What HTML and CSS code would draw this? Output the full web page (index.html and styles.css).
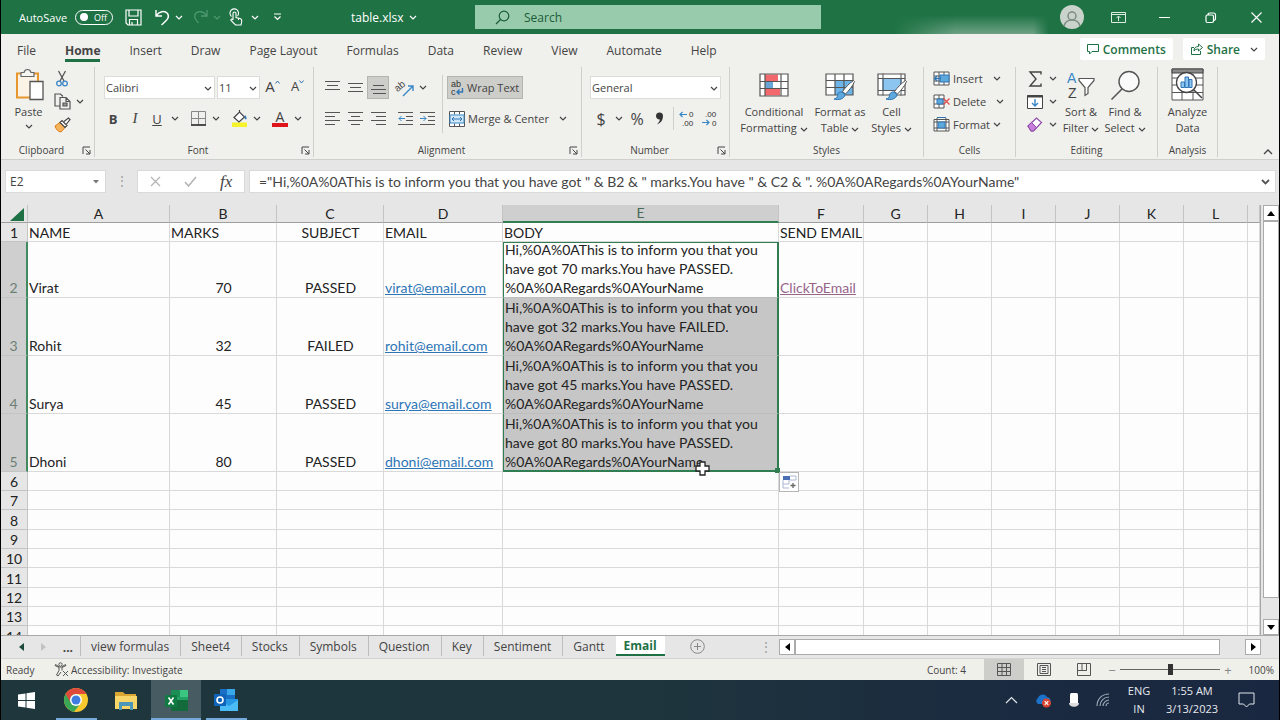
FILE: index.html
```html
<!DOCTYPE html>
<html lang="en">
<head>
    <meta charset="UTF-8">
    <meta name="viewport" content="width=device-width, initial-scale=1.0">
    <title>table.xlsx - Excel</title>
    <link rel="stylesheet" href="styles.css">
</head>
<body>
    <!-- Shared icons -->
    <svg class="defs" width="0" height="0">
        <symbol id="chev" viewBox="0 0 8 5"><path d="M1 1l3 3 3-3" fill="none" stroke="currentColor" stroke-width="1.2"/></symbol>
        <symbol id="launch" viewBox="0 0 9 9"><path d="M1 8V1h7M3.500 3.500L8 8M8 4v4H4" fill="none" stroke="currentColor"/></symbol>
        <symbol id="brush" viewBox="0 0 22 21"><path d="M20.500 1C16 4 12 8.500 9.500 12l3 2.500C16 11 20 6 21.500 2z" fill="#fff" stroke="#555"/><path d="M9 12.500c-2.500-.5-4.500 1-4.500 3.500 0 2-1.500 3-3.500 3.500 4.500 1.500 10.500 0 11-4.500z" fill="#5fa8dc" stroke="#2e75b6"/></symbol>
    </svg>

    <div class="app">
        <!-- Title bar -->
        <header class="titlebar">
            <div class="quick">
                <label for="autosave">AutoSave</label>
                <span class="toggle"><input type="checkbox" id="autosave"><span>Off</span></span>
                <button class="q-save" aria-label="Save"><svg width="17" height="17" viewBox="0 0 17 17" fill="none" stroke="#fff" stroke-width="1.2"><path d="M1 1h15v15H3l-2-2zM4 1v6h9V1M4.500 16v-5.500h8V16M7 13v3"/></svg></button>
                <button class="q-undo" aria-label="Undo"><svg width="17" height="17" viewBox="0 0 17 17" fill="none" stroke="#fff" stroke-width="1.4"><path d="M2 1v6h6M2 7c3-4.500 8.500-6 11.500-2.500 2.500 3.500 0 6.500-6 11.500"/></svg></button>
                <button aria-label="Undo list"><svg class="chev"><use href="#chev"/></svg></button>
                <button class="q-redo" aria-label="Redo"><svg width="17" height="17" viewBox="0 0 17 17" fill="none" stroke="#4f9870" stroke-width="1.3"><path d="M15 1v6H9M15 7C12 2.500 6.500 1 3.500 4.500c-2.500 3.500 0 6.500 3 9.500"/></svg></button>
                <button class="dim" aria-label="Redo list"><svg class="chev"><use href="#chev"/></svg></button>
                <button class="q-touch" aria-label="Touch mode"><svg width="14" height="18" viewBox="0 0 14 18" fill="none" stroke="#fff" stroke-width="1.1"><path d="M2.500 8.500a4.300 4.300 0 1 1 6-.5"/><path d="M4 12V5.500c0-2 3-2 3 0v4l4 1c1.500.5 2 1 1.700 3l-.7 3.500H6.500L2 12.500c-.5-1.500 1-1.800 2-.5M9.500 10v2"/></svg></button>
                <button aria-label="Touch list"><svg class="chev"><use href="#chev"/></svg></button>
                <button class="q-more" aria-label="Customize"><svg width="9" height="8" viewBox="0 0 9 8" fill="none" stroke="#fff" stroke-width="1.200"><path d="M1 1h7M1.500 3.500l3 3 3-3"/></svg></button>
            </div>
            <button class="filename">table.xlsx <svg class="chev"><use href="#chev"/></svg></button>
            <label class="search">
                <svg width="15" height="15" viewBox="0 0 15 15" fill="none" stroke="#1c5c38" stroke-width="1.2"><circle cx="9" cy="6" r="4.800"/><path d="M5.500 9.500L1 14"/></svg>
                <input type="text" placeholder="Search" aria-label="Search">
            </label>
            <div class="account"><span class="smear"></span></div>
            <div class="window">
                <button class="avatar" aria-label="Account"><svg width="24" height="24" viewBox="0 0 24 24"><circle cx="12" cy="12" r="12" fill="#c9d3cb"/><circle cx="12" cy="11" r="4" fill="none" stroke="#7d8c81" stroke-width="1.5"/><path d="M4 21c2-8 14-8 16 0" fill="none" stroke="#7d8c81" stroke-width="1.500"/></svg></button>
                <button aria-label="Ribbon display"><svg width="15" height="11" viewBox="0 0 15 11" fill="none" stroke="#dfece4"><path d="M.5.500h14v10H.5zM.5 2.500h14M7.500 9V4.500M5.500 6l2-2 2 2"/></svg></button>
                <button aria-label="Minimize"><svg width="11" height="11" viewBox="0 0 11 11"><path d="M0 5.500h11" stroke="#fff"/></svg></button>
                <button aria-label="Restore"><svg width="11" height="11" viewBox="0 0 11 11" fill="none" stroke="#fff" stroke-width="1.200"><rect x="1" y="3" width="7.500" height="7.500" rx="1.500"/><path d="M3 3c0-1.500.5-2 2-2h3.500c1.300 0 2 .7 2 2v3.500c0 1-.7 1.800-2 1.800"/></svg></button>
                <button aria-label="Close"><svg width="11" height="11" viewBox="0 0 11 11"><path d="M.5.500l10 10M10.500.500l-10 10" stroke="#fff" stroke-width="1.200"/></svg></button>
            </div>
        </header>

        <!-- Ribbon tabs -->
        <nav class="tabs">
            <button>File</button>
            <button class="active">Home</button>
            <button>Insert</button>
            <button>Draw</button>
            <button>Page Layout</button>
            <button>Formulas</button>
            <button>Data</button>
            <button>Review</button>
            <button>View</button>
            <button>Automate</button>
            <button>Help</button>
            <div class="share">
                <button><svg width="12" height="12" viewBox="0 0 12 12" fill="none" stroke="#1e7145"><path d="M.5 1.500h11v7H5l-2.500 2.500V8.500h-2z"/></svg>Comments</button>
                <button><svg width="13" height="12" viewBox="0 0 13 12" fill="none" stroke="#1e7145"><path d="M4 4.500H1.500v7h9V8M4 8c0-3 1.500-4.500 4.500-4.500V1l4 3.500-4 3.500V6C6.500 6 5 6.500 4 8z"/></svg>Share<svg class="chev"><use href="#chev"/></svg></button>
            </div>
        </nav>

        <!-- Ribbon -->
        <section class="ribbon">
            <div class="group clipboard">
                <div class="body">
                    <button class="big paste">
                        <svg width="30" height="32" viewBox="0 0 30 32"><path d="M3 5h21v24H3z" fill="#fbf3e6" stroke="#e8962e" stroke-width="2"/><path d="M7 8V4h3c1-4 6-4 7 0h3v4z" fill="#f5f5f2" stroke="#666" stroke-width="1.200"/><path d="M16 13h13v18H16z" fill="#fff" stroke="#555" stroke-width="1.300"/></svg>
                        <span>Paste</span><svg class="chev"><use href="#chev"/></svg>
                    </button>
                    <div class="stack">
                        <button class="tool" aria-label="Cut"><svg width="12" height="17" viewBox="0 0 12 17" fill="none"><path d="M2.500 1l5.500 10M9.500 1L4 11" stroke="#555" stroke-width="1.300"/><circle cx="3" cy="13.500" r="2.300" stroke="#3a87c8" stroke-width="1.300"/><circle cx="9" cy="13.500" r="2.300" stroke="#3a87c8" stroke-width="1.300"/></svg></button>
                        <span class="pair"><button class="tool" aria-label="Copy"><svg width="17" height="17" viewBox="0 0 17 17" fill="none" stroke="#555" stroke-width="1.200"><path d="M6 13H1V1h5.500L9 3.500"/><path d="M6 4.500h6l4 4V16H6zM12 4.500v4h4"/><path d="M9 10h4v3H9z" fill="#999"/></svg></button><button class="arrow" aria-label="Copy options"><svg class="chev"><use href="#chev"/></svg></button></span>
                        <button class="tool" aria-label="Format painter"><svg width="17" height="16" viewBox="0 0 17 16"><path d="M1 9l5-3.500 5 5L7 15c-3-.5-5-2.500-6-6z" fill="#f7b35a" stroke="#e07f1c"/><path d="M6 5.500l2-2 5 5-2 2zM10 4.500l4.500-3.500 1.500 1.500-3.500 4.500" fill="#fff" stroke="#444" stroke-width="1.200"/></svg></button>
                    </div>
                </div>
                <div class="caption"><span>Clipboard</span><button aria-label="Clipboard settings"><svg width="9" height="9"><use href="#launch"/></svg></button></div>
            </div>

            <div class="group font">
                <div class="body column">
                    <div class="line">
                        <span class="combo face"><select aria-label="Font"><option>Calibri</option></select><svg class="chev"><use href="#chev"/></svg></span>
                        <span class="combo size"><select aria-label="Font size"><option>11</option></select><svg class="chev"><use href="#chev"/></svg></span>
                        <button class="tool grow" aria-label="Increase font size"><b>A</b><svg width="5" height="4" viewBox="0 0 5 4"><path d="M.5 3.500l2-2.500 2 2.500" fill="none" stroke="#2e75b6"/></svg></button>
                        <button class="tool grow small" aria-label="Decrease font size"><b>A</b><svg width="5" height="4" viewBox="0 0 5 4"><path d="M.5.500l2 2.500 2-2.500" fill="none" stroke="#2e75b6"/></svg></button>
                    </div>
                    <div class="line marks">
                        <button class="tool bold">B</button>
                        <button class="tool italic">I</button>
                        <span class="pair"><button class="tool underline">U</button><button class="arrow" aria-label="Underline options"><svg class="chev"><use href="#chev"/></svg></button></span>
                        <span class="pair"><button class="tool" aria-label="Borders"><svg width="15" height="15" viewBox="0 0 15 15"><path d="M.5.500h14v13.500H.5zM7.500 1v13M1 7.500h13" fill="none" stroke="#888"/><path d="M0 14h15" stroke="#333" stroke-width="1.600"/></svg></button><button class="arrow" aria-label="Border options"><svg class="chev"><use href="#chev"/></svg></button></span>
                        <span class="pair"><button class="tool" aria-label="Fill color"><svg width="17" height="17" viewBox="0 0 17 17"><path d="M1 12.500h15V17H1z" fill="#f7f32a"/><path d="M3 7.500L8.500 2l5 5L8 12zM8.500 2V0" fill="#fff" stroke="#444" stroke-width="1.200"/><path d="M14 5c2 2.500 2 4 .8 4.500C13 9 13.500 7 14 5z" fill="#2e75b6"/></svg></button><button class="arrow" aria-label="Fill options"><svg class="chev"><use href="#chev"/></svg></button></span>
                        <span class="pair"><button class="tool color">A</button><button class="arrow" aria-label="Font color options"><svg class="chev"><use href="#chev"/></svg></button></span>
                    </div>
                </div>
                <div class="caption"><span>Font</span><button aria-label="Font settings"><svg width="9" height="9"><use href="#launch"/></svg></button></div>
            </div>

            <div class="group alignment">
                <div class="body">
                    <div class="column">
                        <div class="line">
                            <button class="tool" aria-label="Top align"><svg class="bars"><path d="M0 1.500h15M2 5.500h11M0 9.500h15"/></svg></button>
                            <button class="tool" aria-label="Middle align"><svg class="bars"><path d="M0 3.500h15M2 7.500h11M0 11.500h15"/></svg></button>
                            <button class="tool on" aria-label="Bottom align"><svg class="bars"><path d="M2 5.500h11M0 9.500h15M2 13.500h13"/></svg></button>
                            <span class="pair"><button class="tool" aria-label="Orientation"><svg width="18" height="18" viewBox="0 0 18 18"><text x="1" y="12" transform="rotate(-40 3 12)" font-size="10" fill="#444">ab</text><path d="M7 17L16.500 7.500M12 7h5v5" fill="none" stroke="#3a87c8" stroke-width="1.400"/></svg></button><button class="arrow" aria-label="Orientation options"><svg class="chev"><use href="#chev"/></svg></button></span>
                        </div>
                        <div class="line">
                            <button class="tool" aria-label="Align left"><svg class="bars"><path d="M0 1.500h15M0 5.500h10M0 9.500h15M0 13.500h10"/></svg></button>
                            <button class="tool" aria-label="Center"><svg class="bars"><path d="M0 1.500h15M3 5.500h9M0 9.500h15M3 13.500h9"/></svg></button>
                            <button class="tool" aria-label="Align right"><svg class="bars"><path d="M0 1.500h15M5 5.500h10M0 9.500h15M5 13.500h10"/></svg></button>
                            <span class="pair">
                                <button class="tool" aria-label="Decrease indent"><svg class="bars"><path d="M0 1.500h15M8 5.500h7M8 9.500h7M0 13.500h15"/><path class="blue" d="M7 7.500H1M3.500 5L1 7.500 3.500 10"/></svg></button>
                                <button class="tool" aria-label="Increase indent"><svg class="bars"><path d="M0 1.500h15M8 5.500h7M8 9.500h7M0 13.500h15"/><path class="blue" d="M0 7.500h6M3.500 5L6 7.500 3.500 10"/></svg></button>
                            </span>
                        </div>
                    </div>
                    <div class="column split">
                        <button class="text on"><svg width="15" height="18" viewBox="0 0 15 18"><text x="2" y="8" font-size="9" fill="#333">ab</text><text x="2" y="16" font-size="9" fill="#333">c</text><path d="M13.500 9v4H8M10.500 10.500L8 13l2.500 2.500" fill="none" stroke="#2e75b6" stroke-width="1.400"/></svg>Wrap Text</button>
                        <button class="text"><svg width="16" height="16" viewBox="0 0 16 16"><path d="M.5.500h15v15H.5zM5.500.500v3M10.500.500v3M5.500 12.500v3M10.500 12.500v3" fill="#fff" stroke="#555"/><path d="M1 4h14v8H1z" fill="#d2e8f8" stroke="#3a87c8"/><path d="M3 8h10M5 6L3 8l2 2M11 6l2 2-2 2" fill="none" stroke="#2e75b6"/></svg>Merge &amp; Center<svg class="chev gap"><use href="#chev"/></svg></button>
                    </div>
                </div>
                <div class="caption"><span>Alignment</span><button aria-label="Alignment settings"><svg width="9" height="9"><use href="#launch"/></svg></button></div>
            </div>

            <div class="group number">
                <div class="body column">
                    <span class="combo format"><select aria-label="Number format"><option>General</option></select><svg class="chev"><use href="#chev"/></svg></span>
                    <div class="line">
                        <button class="tool sign">$</button><button class="arrow" aria-label="Currency options"><svg class="chev"><use href="#chev"/></svg></button>
                        <button class="tool sign">%</button>
                        <button class="tool" aria-label="Comma style"><svg width="9" height="13" viewBox="0 0 9 13"><path d="M1 4a3.500 3.500 0 0 1 7 0c0 4-2 7-6 8.500 1.800-2 2.800-3.500 2.800-5C2.500 7.500 1 6 1 4z" fill="#333"/></svg></button>
                        <button class="tool rule" aria-label="Increase decimal"><svg width="17" height="19" viewBox="0 0 17 19"><text x="11" y="8" font-size="8" fill="#333">0</text><text x="4" y="17" font-size="8" fill="#333">.00</text><path d="M9 5.500H2M4.500 3L2 5.500 4.500 8" fill="none" stroke="#3a87c8" stroke-width="1.200"/></svg></button>
                        <button class="tool" aria-label="Decrease decimal"><svg width="17" height="19" viewBox="0 0 17 19"><text x="4" y="8" font-size="8" fill="#333">.00</text><text x="11" y="17" font-size="8" fill="#333">0</text><path d="M1 13.500h7M5.500 11L8 13.500 5.500 16" fill="none" stroke="#3a87c8" stroke-width="1.200"/></svg></button>
                    </div>
                </div>
                <div class="caption"><span>Number</span><button aria-label="Number settings"><svg width="9" height="9"><use href="#launch"/></svg></button></div>
            </div>

            <div class="group styles">
                <div class="body">
                    <button class="big cond">
                        <svg width="30" height="32" viewBox="0 0 30 32"><path d="M1 5.500h28v22H1z" fill="#fff"/><path d="M6 6h13v7H6zM6 20h15v7H6z" fill="#f2686c"/><path d="M6 13h8v7H6z" fill="#6aa5d8"/><path d="M1 5.500h28v22H1zM6 5v23M22 5v23M1 13h28M1 20h28" fill="none" stroke="#555" stroke-width="1.200"/></svg>
                        <span>Conditional<br>Formatting <svg class="chev"><use href="#chev"/></svg></span>
                    </button>
                    <button class="big fmt">
                        <svg width="32" height="32" viewBox="0 0 32 32"><path d="M2 5.500h27v21H2z" fill="#fff"/><path d="M11 12h18v14.500H11z" fill="#6db4e8"/><path d="M2 5.500h27v21H2zM11 5v22M20 5v22M2 12h27M2 19h27" fill="none" stroke="#555" stroke-width="1.200"/><use href="#brush" x="9" y="11" width="22" height="21"/></svg>
                        <span>Format as<br>Table <svg class="chev"><use href="#chev"/></svg></span>
                    </button>
                    <button class="big cell">
                        <svg width="32" height="32" viewBox="0 0 32 32"><path d="M2 5.500h27v21H2z" fill="#fff" stroke="#555" stroke-width="1.200"/><path d="M7 10h18v12H7z" fill="#8cc5ef" stroke="#3a87c8"/><path d="M7 5v22M25 5v22M2 10h27M2 22h27" fill="none" stroke="#555"/><use href="#brush" x="9" y="11" width="22" height="21"/></svg>
                        <span>Cell<br>Styles <svg class="chev"><use href="#chev"/></svg></span>
                    </button>
                </div>
                <div class="caption"><span>Styles</span></div>
            </div>

            <div class="group cells">
                <div class="body stack">
                    <button class="text"><svg width="17" height="15" viewBox="0 0 17 15"><path d="M1 1h15v13H1zM1 5h15M1 10h15M6 1v13M11 1v13" fill="#fff" stroke="#555"/><path d="M7 4h9v7H7z" fill="#5fa8dc" stroke="#2e75b6"/><path d="M8 7.500H1M4 5L1.500 7.500 4 10" fill="none" stroke="#2e75b6" stroke-width="1.300"/></svg>Insert<svg class="chev gap"><use href="#chev"/></svg></button>
                    <button class="text"><svg width="17" height="15" viewBox="0 0 17 15"><path d="M1 1h10v13H1zM1 5h10M1 10h10M6 1v13" fill="#fff" stroke="#555"/><path d="M4 5h6v5H4z" fill="#5fa8dc" stroke="#2e75b6"/><path d="M10.500 4.500l6 6M16.500 4.500l-6 6" stroke="#e05050" stroke-width="1.400"/></svg>Delete<svg class="chev gap"><use href="#chev"/></svg></button>
                    <button class="text"><svg width="17" height="15" viewBox="0 0 17 15"><path d="M1 2.500h15V14H1zM4 1v13M13 1v13M1 5h15M1 11h15" fill="#fff" stroke="#555"/><path d="M5 5h7v6H5z" fill="#5fa8dc" stroke="#2e75b6"/><path d="M4 .500h9" stroke="#2e75b6"/></svg>Format<svg class="chev"><use href="#chev"/></svg></button>
                </div>
                <div class="caption"><span>Cells</span></div>
            </div>

            <div class="group editing">
                <div class="body">
                    <div class="stack">
                        <span class="pair"><button class="tool" aria-label="AutoSum"><svg width="13" height="16" viewBox="0 0 13 16"><path d="M12 3.500V1H1l6 7-6 7h11v-2.500" fill="none" stroke="#444" stroke-width="1.400"/></svg></button><button class="arrow" aria-label="Sum options"><svg class="chev"><use href="#chev"/></svg></button></span>
                        <span class="pair"><button class="tool" aria-label="Fill"><svg width="16" height="14" viewBox="0 0 16 14"><path d="M.5.500h15v13H.5z" fill="#fff" stroke="#444"/><path d="M0 1.500h16" stroke="#444" stroke-width="2"/><path d="M8 4v7M5 8l3 3 3-3" fill="none" stroke="#3a87c8" stroke-width="1.400"/></svg></button><button class="arrow" aria-label="Fill options"><svg class="chev"><use href="#chev"/></svg></button></span>
                        <span class="pair"><button class="tool" aria-label="Clear"><svg width="16" height="15" viewBox="0 0 16 15"><path d="M1 9L9.500 1l5 4.500L6.500 14H4z" fill="#fff" stroke="#8e4aa8" stroke-width="1.200"/><path d="M1 9l3.500-3.500 5 5L6.500 14H4z" fill="#c77fdb" stroke="#8e4aa8"/></svg></button><button class="arrow" aria-label="Clear options"><svg class="chev"><use href="#chev"/></svg></button></span>
                    </div>
                    <button class="big sort">
                        <svg width="30" height="32" viewBox="0 0 30 32"><text x="1" y="14" font-size="14" fill="#3a87c8">A</text><text x="2" y="29" font-size="14" fill="#444">Z</text><path d="M13 10h15v2l-6 7v6l-3 2v-8l-6-7z" fill="#fff" stroke="#555" stroke-width="1.200"/></svg>
                        <span>Sort &amp;<br>Filter <svg class="chev"><use href="#chev"/></svg></span>
                    </button>
                    <button class="big find">
                        <svg width="30" height="32" viewBox="0 0 30 32"><circle cx="19" cy="13" r="10" fill="#fafafa" stroke="#555" stroke-width="1.400"/><path d="M12 20.500L1.500 31" stroke="#555" stroke-width="1.600"/></svg>
                        <span>Find &amp;<br>Select <svg class="chev"><use href="#chev"/></svg></span>
                    </button>
                </div>
                <div class="caption"><span>Editing</span></div>
            </div>

            <div class="group analysis">
                <div class="body">
                    <button class="big data">
                        <svg width="33" height="33" viewBox="0 0 33 33"><path d="M1 1h31v31H1zM1 10h31M1 17h31M1 24.500h31M11 6v26M22 6v26" fill="#fff" stroke="#555"/><path d="M1 1h31v4H1z" fill="#8a8a8a" stroke="#444"/><circle cx="15.500" cy="14.500" r="10" fill="#fff" stroke="#444" stroke-width="1.300"/><path d="M22.500 21.500L31 30" stroke="#444" stroke-width="1.500"/><path d="M10 14h3.500v5.500H10zM14 9h3.500v10.500H14zM18 11.500h3v8h-3z" fill="#8cc5ef" stroke="#2e75b6"/></svg>
                        <span>Analyze<br>Data</span>
                    </button>
                </div>
                <div class="caption"><span>Analysis</span></div>
            </div>
            <button class="collapse" aria-label="Collapse ribbon"><svg width="10" height="6" viewBox="0 0 10 6"><path d="M1 5l4-4 4 4" fill="none" stroke="#444" stroke-width="1.300"/></svg></button>
        </section>

        <!-- Formula bar -->
        <section class="formulabar">
            <div class="namebox"><input type="text" value="E2" aria-label="Name box"><button aria-label="Names"><svg width="6" height="4" viewBox="0 0 6 4"><path d="M0 0h6L3 3.500z" fill="#777"/></svg></button></div>
            <span class="dots">⋮</span>
            <div class="fx">
                <button aria-label="Cancel"><svg width="11" height="11" viewBox="0 0 11 11"><path d="M1 1l9 9M10 1l-9 9" stroke="#b5b5b5" stroke-width="1.300"/></svg></button>
                <button aria-label="Enter"><svg width="13" height="11" viewBox="0 0 13 11"><path d="M1 6l3.500 4L12 1" fill="none" stroke="#b5b5b5" stroke-width="1.600"/></svg></button>
                <button class="fn">fx</button>
            </div>
            <div class="formula">
                <input type="text" aria-label="Formula" value="=&quot;Hi,%0A%0AThis is to inform you that you have got &quot; &amp; B2 &amp; &quot; marks.You have &quot; &amp; C2 &amp; &quot;. %0A%0ARegards%0AYourName&quot;">
                <button aria-label="Expand"><svg width="9" height="6" viewBox="0 0 9 6"><path d="M1 1l3.500 3.500L8 1" fill="none" stroke="#555" stroke-width="1.800"/></svg></button>
            </div>
        </section>

        <!-- Worksheet -->
        <main class="sheet">
            <div class="cells-area">
                <table>
                    <colgroup>
                        <col class="c-num"><col class="c-a"><col class="c-b"><col class="c-b"><col class="c-d"><col class="c-e"><col class="c-f">
                        <col class="c-g"><col class="c-g"><col class="c-g"><col class="c-g"><col class="c-g"><col class="c-g"><col>
                    </colgroup>
                    <thead>
                        <tr><th class="corner"><svg width="14" height="13" viewBox="0 0 14 13"><path d="M14 0v13H0z" fill="#1e7145"/></svg></th><th>A</th><th>B</th><th>C</th><th>D</th><th class="sel">E</th><th>F</th><th>G</th><th>H</th><th>I</th><th>J</th><th>K</th><th>L</th><th></th></tr>
                    </thead>
                    <tbody>
                        <tr><th>1</th><td>NAME</td><td>MARKS</td><td class="mid">SUBJECT</td><td>EMAIL</td><td>BODY</td><td>SEND EMAIL</td><td></td><td></td><td></td><td></td><td></td><td></td><td></td></tr>
                        <tr class="tall first"><th>2</th><td>Virat</td><td class="mid">70</td><td class="mid">PASSED</td><td><a href="mailto:virat@email.com">virat@email.com</a></td><td class="pick"><div>Hi,%0A%0AThis is to inform you that you<br>have got 70 marks.You have PASSED.<br>%0A%0ARegards%0AYourName</div></td><td><a class="visited" href="#send">ClickToEmail</a></td><td></td><td></td><td></td><td></td><td></td><td></td><td></td></tr>
                        <tr class="tall"><th>3</th><td>Rohit</td><td class="mid">32</td><td class="mid">FAILED</td><td><a href="mailto:rohit@email.com">rohit@email.com</a></td><td class="pick"><div>Hi,%0A%0AThis is to inform you that you<br>have got 32 marks.You have FAILED.<br>%0A%0ARegards%0AYourName</div></td><td></td><td></td><td></td><td></td><td></td><td></td><td></td><td></td></tr>
                        <tr class="tall"><th>4</th><td>Surya</td><td class="mid">45</td><td class="mid">PASSED</td><td><a href="mailto:surya@email.com">surya@email.com</a></td><td class="pick"><div>Hi,%0A%0AThis is to inform you that you<br>have got 45 marks.You have PASSED.<br>%0A%0ARegards%0AYourName</div></td><td></td><td></td><td></td><td></td><td></td><td></td><td></td><td></td></tr>
                        <tr class="tall last"><th>5</th><td>Dhoni</td><td class="mid">80</td><td class="mid">PASSED</td><td><a href="mailto:dhoni@email.com">dhoni@email.com</a></td><td class="pick"><div>Hi,%0A%0AThis is to inform you that you<br>have got 80 marks.You have PASSED.<br>%0A%0ARegards%0AYourName</div>
                            <span class="handle"></span>
                            <button class="autofill" aria-label="Auto fill options"><svg width="15" height="14" viewBox="0 0 15 14"><path d="M1 1h7v4H1z" fill="#4a6fb5"/><path d="M8 1h6v4H8M1 5v4h6V5M1 9v4h6" fill="none" stroke="#a9b6d3"/><path d="M11 8v5M8.500 10.500h5" stroke="#666" stroke-width="1.300"/></svg></button>
                            <svg class="pointer" width="15" height="15" viewBox="0 0 15 15"><path d="M5 1h5v4h4v5h-4v4H5v-4H1V5h4z" fill="#fff" stroke="#222" stroke-width="1.300"/></svg>
                        </td><td></td><td></td><td></td><td></td><td></td><td></td><td></td><td></td></tr>
                        <tr><th>6</th><td></td><td></td><td></td><td></td><td></td><td></td><td></td><td></td><td></td><td></td><td></td><td></td><td></td></tr>
                        <tr><th>7</th><td></td><td></td><td></td><td></td><td></td><td></td><td></td><td></td><td></td><td></td><td></td><td></td><td></td></tr>
                        <tr><th>8</th><td></td><td></td><td></td><td></td><td></td><td></td><td></td><td></td><td></td><td></td><td></td><td></td><td></td></tr>
                        <tr><th>9</th><td></td><td></td><td></td><td></td><td></td><td></td><td></td><td></td><td></td><td></td><td></td><td></td><td></td></tr>
                        <tr><th>10</th><td></td><td></td><td></td><td></td><td></td><td></td><td></td><td></td><td></td><td></td><td></td><td></td><td></td></tr>
                        <tr><th>11</th><td></td><td></td><td></td><td></td><td></td><td></td><td></td><td></td><td></td><td></td><td></td><td></td><td></td></tr>
                        <tr><th>12</th><td></td><td></td><td></td><td></td><td></td><td></td><td></td><td></td><td></td><td></td><td></td><td></td><td></td></tr>
                        <tr><th>13</th><td></td><td></td><td></td><td></td><td></td><td></td><td></td><td></td><td></td><td></td><td></td><td></td><td></td></tr>
                        <tr><th>14</th><td></td><td></td><td></td><td></td><td></td><td></td><td></td><td></td><td></td><td></td><td></td><td></td><td></td></tr>
                    </tbody>
                </table>
            </div>
            <div class="vscroll">
                <button aria-label="Scroll up"><svg width="8" height="5" viewBox="0 0 8 5"><path d="M4 0l4 5H0z"/></svg></button>
                <span class="thumb"></span>
                <button aria-label="Scroll down"><svg width="8" height="5" viewBox="0 0 8 5"><path d="M0 0h8L4 5z"/></svg></button>
            </div>
        </main>

        <!-- Sheet tabs -->
        <nav class="sheets">
            <div class="step">
                <button aria-label="Previous sheet"><svg width="5" height="8" viewBox="0 0 5 8"><path d="M5 0v8L0 4z" fill="#1c4a3a"/></svg></button>
                <button aria-label="Next sheet"><svg width="5" height="8" viewBox="0 0 5 8"><path d="M0 0v8l5-4z" fill="#c2c2c2"/></svg></button>
                <button class="all">...</button>
            </div>
            <button>view formulas</button>
            <button>Sheet4</button>
            <button>Stocks</button>
            <button>Symbols</button>
            <button>Question</button>
            <button>Key</button>
            <button>Sentiment</button>
            <button>Gantt</button>
            <button class="active">Email</button>
            <button class="add" aria-label="New sheet"><svg width="15" height="15" viewBox="0 0 15 15" fill="none" stroke="#888"><circle cx="7.500" cy="7.500" r="6.800"/><path d="M7.500 4v7M4 7.500h7"/></svg></button>
            <span class="dots">⋮</span>
            <div class="hscroll">
                <button aria-label="Scroll left"><svg width="5" height="8" viewBox="0 0 5 8"><path d="M5 0v8L0 4z"/></svg></button>
                <span class="thumb"></span>
                <button aria-label="Scroll right"><svg width="5" height="8" viewBox="0 0 5 8"><path d="M0 0v8l5-4z"/></svg></button>
            </div>
        </nav>

        <!-- Status bar -->
        <footer class="status">
            <span class="ready">Ready</span>
            <svg width="15" height="15" viewBox="0 0 15 15" fill="none" stroke="#555"><circle cx="6.500" cy="2.500" r="1.700"/><path d="M1 3.500l4 2v3L2.500 13l1.500 1 3-4M12 3.500l-4 2v3M1 3.500l.5-1 4 2.500h2l4-2.500.5 1M9 9l5 5M14 9l-5 5"/></svg>
            <span>Accessibility: Investigate</span>
            <span class="count">Count: 4</span>
            <button class="view on" aria-label="Normal"><svg width="14" height="13" viewBox="0 0 14 13" fill="none" stroke="#555"><path d="M.5.500h13v12H.5zM.5 4.500h13M.5 8.500h13M5 .500v12M9.500.500v12"/></svg></button>
            <button class="view" aria-label="Page layout"><svg width="14" height="13" viewBox="0 0 14 13" fill="none" stroke="#555"><path d="M.5.500h13v12H.5zM3 2.500h8v8H3zM5 4.500h4M5 6.500h4M5 8.500h4"/></svg></button>
            <button class="view" aria-label="Page break"><svg width="14" height="13" viewBox="0 0 14 13" fill="none" stroke="#555"><path d="M.5.500h13v12H.5zM5 .500v7h4.500v-7M.5 7.500H5M9.500 7.500v-3"/></svg></button>
            <button class="zoom">−</button>
            <input type="range" min="0" max="100" value="50" aria-label="Zoom">
            <button class="zoom">+</button>
            <span class="percent">100%</span>
        </footer>

        <!-- Taskbar -->
        <footer class="taskbar">
            <button aria-label="Start"><svg width="17" height="17" viewBox="0 0 17 17"><path d="M0 2.500l7.500-1V8H0zM8.500 1.300L17 0v8H8.500zM0 9h7.500v6.500l-7.500-1zM8.500 9H17v8l-8.500-1.300z" fill="#fff"/></svg></button>
            <button class="open" aria-label="Chrome"><svg width="24" height="24" viewBox="0 0 24 24"><circle cx="12" cy="12" r="12" fill="#f9c72e"/><path d="M12 6L1.600 6a12 12 0 0 0 8.400 17.800L17 15z" fill="#3aa757"/><path d="M1.600 6A12 12 0 0 1 22.400 6H12a6 6 0 0 0-5.200 9z" fill="#df4a3c"/><circle cx="12" cy="12" r="6" fill="#fff"/><circle cx="12" cy="12" r="4.500" fill="#3f7de0"/></svg></button>
            <button aria-label="File Explorer"><svg width="22" height="19" viewBox="0 0 22 19"><path d="M0 1h8l2 2h11v5H0z" fill="#dba534"/><path d="M0 5h22v13H0z" fill="#f8d568"/><path d="M4 11h14v8h-3v-4H7v4H4z" fill="#4c96b8"/></svg></button>
            <button class="open now" aria-label="Excel"><svg width="23" height="21" viewBox="0 0 23 21"><path d="M6 0h17v21H6z" fill="#21a366"/><path d="M6 0h9v7H6z" fill="#1b8f56"/><path d="M15 0h8v7h-8z" fill="#3cc481"/><path d="M6 10h17v11H6z" fill="#136b3c"/><path d="M0 5h12v12H0z" fill="#0f7a41"/><path d="M3.500 7.500l5 7M8.500 7.500l-5 7" stroke="#fff" stroke-width="1.600"/></svg></button>
            <button class="open" aria-label="Outlook"><svg width="24" height="22" viewBox="0 0 24 22"><path d="M6 0h15v12H6z" fill="#1a70c4"/><path d="M13 0h8v6h-8z" fill="#38a8ea"/><path d="M6 10h18v12H6z" fill="#2597e3"/><path d="M6 11l9 6 9-6v11H6z" fill="#4bbcf5"/><path d="M0 5h12v12H0z" fill="#0f64b8"/><circle cx="6" cy="11" r="3" fill="none" stroke="#fff" stroke-width="1.600"/></svg></button>
            <div class="tray">
                <svg width="13" height="8" viewBox="0 0 13 8"><path d="M1 7l5.500-5.500L12 7" fill="none" stroke="#dfe5ea" stroke-width="1.200"/></svg>
                <svg width="17" height="15" viewBox="0 0 17 15"><path d="M3 11a3.500 3.500 0 0 1 0-6c1-4 7-5 9-1 3 0 4 3 3.500 7z" fill="#1b72c8"/><circle cx="11.500" cy="10" r="4.500" fill="#d8432f"/><path d="M9.700 8.200l3.600 3.600M13.300 8.200l-3.600 3.600" stroke="#fff" stroke-width="1.200"/></svg>
                <svg width="10" height="17" viewBox="0 0 10 17"><rect x="1" y="1" width="8" height="12" rx="1.500" fill="#fff"/><path d="M0 11c0 5 10 5 10 0" fill="#ddd"/></svg>
                <svg width="14" height="14" viewBox="0 0 14 14" fill="none" stroke="#9aa7b3" stroke-width="1.200"><path d="M1 13C1 6 6 1 13 1M4 13c0-5 4-9 9-9M7 13c0-3 3-6 6-6M10 13c0-1.500 1.500-3 3-3"/></svg>
                <span class="lang">ENG<br>IN</span>
                <span class="clock">1:55 AM<br>3/13/2023</span>
                <svg width="17" height="16" viewBox="0 0 17 16"><path d="M1 1h15v11h-4.500l-3 3-3-3H1z" fill="none" stroke="#dfe5ea"/></svg>
            </div>
        </footer>
    </div>
</body>
</html>
```
FILE: styles.css
```css
* {
    box-sizing: border-box;
}

body {
    margin: 0;
    background: #000;
    font-family: "Open Sans", "Noto Sans", sans-serif;
    font-size: 12px;
    color: #444;
}

button, input, select {
    font: inherit;
    color: inherit;
    background: none;
    border: none;
    padding: 0;
    margin: 0;
    outline: none;
}

button {
    display: flex;
    align-items: center;
    justify-content: center;
    flex: none;
    white-space: nowrap;
}

svg {
    flex: none;
    overflow: visible;
    font-family: "Liberation Sans", Arial, sans-serif;
}

.defs {
    position: absolute;
}

.chev {
    width: 8px;
    height: 5px;
}

.app {
    display: flex;
    flex-direction: column;
    height: 100vh;
    margin: 0 1px;
    overflow: hidden;
}

/* Title bar */
.titlebar {
    display: flex;
    align-items: center;
    flex: none;
    height: 34px;
    background: #1e7244;
    color: #fff;
}

.quick {
    display: flex;
    align-items: center;
    width: 350px;
    padding-left: 18px;
    font-size: 11px;
}

.toggle {
    display: flex;
    align-items: center;
    width: 38px;
    height: 15px;
    margin-left: 8px;
    padding: 0 4px;
    gap: 6px;
    border: 1px solid #fff;
    border-radius: 8px;
    font-size: 9px;
}

.toggle input {
    appearance: none;
    width: 8px;
    height: 8px;
    border-radius: 50%;
    background: #fff;
}

.q-save { margin-left: 12px; }
.q-undo { margin: 0 4px 0 12px; }
.q-redo { margin: 0 4px 0 9px; }
.q-touch { margin: 0 8px 0 8px; }
.q-more { margin-left: 14px; }
.dim { color: #4f9870; }

.filename {
    justify-content: flex-start;
    width: 124px;
    gap: 5px;
    font-size: 12px;
}

.search {
    display: flex;
    align-items: center;
    flex: 0 1 346px;
    height: 24px;
    padding-left: 20px;
    gap: 14px;
    background: #98cbac;
    color: #1c5c38;
}

.search input::placeholder {
    color: #1c5c38;
    opacity: 1;
}

.account {
    display: flex;
    align-items: flex-end;
    flex: 1;
    height: 34px;
}

/* blurred account name */
.smear {
    flex: 1;
    height: 24px;
    margin-left: 72px;
    background: linear-gradient(to bottom, transparent 20%, #8fb79e);
    mask-image: linear-gradient(to right, transparent, #000 40%, #000 90%, transparent);
    opacity: 0.7;
}

.window {
    display: flex;
    align-items: center;
}

.window button {
    width: 46px;
    height: 34px;
}

/* Ribbon tabs */
.tabs {
    display: flex;
    flex: none;
    align-items: center;
    gap: 29px;
    height: 30px;
    padding: 0 14px 0 16px;
    background: #f0f0ec;
}

.tabs > button {
    height: 24px;
    margin-top: 2px;
    border-bottom: 3px solid transparent;
    border-top: 3px solid transparent;
}

.tabs > .active {
    font-weight: 700;
    border-bottom-color: #1e7145;
}

.share {
    display: flex;
    gap: 10px;
    margin-left: auto;
}

.share button {
    height: 22px;
    padding: 0 7px;
    gap: 4px;
    background: #fff;
    color: #1e7145;
    font-weight: 600;
    border-radius: 2px;
}

.share .chev {
    margin-left: 6px;
    color: #444;
}

/* Ribbon */
.ribbon {
    display: flex;
    flex: none;
    height: 96px;
    padding: 3px 0 2px;
    background: #f0f0ec;
    border-bottom: 1px solid #cfcfcd;
    font-size: 11px;
}

.group {
    display: flex;
    flex-direction: column;
    flex: none;
    border-right: 1px solid #cfcfcb;
}

.clipboard { width: 94px; }
.font { width: 219px; }
.alignment { width: 268px; }
.number { width: 148px; }
.styles { width: 194px; }
.cells { width: 92px; }
.editing { width: 142px; }
.analysis { width: 60px; }

.body {
    display: flex;
    flex: 1;
}

.column {
    display: flex;
    flex-direction: column;
    gap: 8px;
    padding-top: 9px;
}

.line, .pair {
    display: flex;
    align-items: center;
}

.stack {
    display: flex;
    flex-direction: column;
}

.caption {
    display: flex;
    align-items: center;
    height: 14px;
    font-size: 10px;
}

.caption span {
    flex: 1;
    text-align: center;
}

.caption button {
    margin-right: 3px;
}

.tool {
    width: 22px;
    height: 23px;
}

.arrow {
    width: 14px;
    height: 23px;
}

.on {
    background: #cdcdc9;
    outline: 1px solid #b4b4b0;
    outline-offset: -1px;
}

.big {
    flex-direction: column;
    justify-content: flex-start;
    height: 72px;
    padding-top: 1px;
    line-height: 16px;
}

.big > svg:first-child {
    height: 33px;
    margin-bottom: 3px;
}

.paste { width: 50px; padding-left: 5px; }
.paste .chev { margin-top: 4px; }
.cond { width: 74px; }
.fmt { width: 58px; }
.cell { width: 45px; }
.sort { width: 44px; }
.find { width: 44px; }
.data { width: 59px; }

.clipboard .pair {
    margin-right: -4px;
}

.font .body {
    padding-left: 9px;
}

.marks {
    margin-left: -2px;
}

.marks .pair + .pair {
    margin-left: 5px;
}

.combo {
    position: relative;
    display: block;
    height: 23px;
    background: #fff;
    border: 1px solid #dcdcd8;
}

.combo select {
    appearance: none;
    width: 100%;
    height: 21px;
    padding-left: 1px;
}

.combo .chev {
    position: absolute;
    right: 2px;
    top: 9px;
}

.face { width: 111px; margin-right: 2px; }
.size { width: 43px; }
.format { width: 131px; }

.grow {
    align-items: flex-start;
    width: 25px;
}

.grow b {
    font-size: 15px;
    font-weight: 400;
    line-height: 20px;
}

.grow.small b {
    font-size: 13px;
}

.grow svg {
    margin-top: 4px;
}

.bold, .italic, .underline {
    font-size: 13px;
}

.bold { font-weight: 700; }
.italic { font-family: "Liberation Serif", serif; font-style: italic; font-size: 15px; }
.underline { text-decoration: underline; }

.color {
    width: 16px;
    height: 17px;
    margin: 0 3px;
    font-size: 14px;
    line-height: 13px;
    border-bottom: 4px solid #e0151b;
}

.alignment .column {
    padding-left: 7px;
}

.alignment .line {
    gap: 1px;
}

.alignment .pair {
    margin-left: 4px;
}

.alignment .split {
    align-items: flex-start;
    height: 67px;
    margin-left: 4px;
    padding-left: 5px;
    background: linear-gradient(#cfcfcb, #cfcfcb) 0 8px / 1px 58px no-repeat;
}

.bars {
    width: 15px;
    height: 15px;
    fill: none;
    stroke: #555;
    stroke-width: 1px;
}

.bars .blue {
    stroke: #3a87c8;
}

.text {
    justify-content: flex-start;
    height: 23px;
    padding: 0 4px 0 2px;
    gap: 3px;
}

.gap {
    margin-left: 7px;
}

.number .body {
    padding-left: 8px;
}

.sign {
    font-size: 16px;
}

.rule {
    margin-left: 3px;
    border-left: 1px solid #cfcfcb;
    width: 25px;
}

.styles .body {
    padding-left: 7px;
}

.cells .stack {
    padding-left: 7px;
}

.editing .body {
    padding-left: 8px;
}

.editing .pair {
    margin-right: -1px;
}

.collapse {
    align-self: flex-end;
    margin-left: auto;
    width: 22px;
    height: 10px;
}

/* Formula bar */
.formulabar {
    display: flex;
    flex: none;
    height: 45px;
    padding: 10px 3px 12px 4px;
    background: #e6e6e6;
}

.namebox, .fx, .formula {
    display: flex;
    align-items: center;
    background: #fff;
    border: 1px solid #dadada;
}

.namebox {
    width: 101px;
    padding: 0 6px 0 4px;
}

.namebox input {
    flex: 1;
    width: 60px;
}

.dots {
    width: 31px;
    text-align: center;
    color: #999;
    line-height: 22px;
}

.fx {
    justify-content: space-around;
    width: 108px;
}

.fn {
    font-family: "Liberation Serif", serif;
    font-style: italic;
    font-size: 17px;
}

.formula {
    flex: 1;
    margin-left: 4px;
    padding: 0 5px 0 9px;
}

.formula input {
    flex: 1;
    font-family: Lato, Calibri, sans-serif;
    font-size: 14px;
}

/* Worksheet */
.sheet {
    display: flex;
    flex: 1;
    min-height: 0;
    background: #e6e6e6;
}

.cells-area {
    flex: 1;
    min-width: 0;
    overflow: hidden;
    border-right: 1px solid #a8a8a8;
}

table {
    width: 100%;
    table-layout: fixed;
    border-collapse: separate;
    border-spacing: 0;
    font-family: Lato, Calibri, sans-serif;
    font-size: 14px;
    line-height: 17px;
    color: #222;
}

.c-num { width: 27px; }
.c-a { width: 142px; }
.c-b { width: 107px; }
.c-d { width: 119px; }
.c-e { width: 276px; }
.c-f { width: 85px; }
.c-g { width: 64px; }

th, td {
    height: 19px;
    padding: 0 0 0 1px;
    text-align: left;
    vertical-align: bottom;
    white-space: nowrap;
    border-right: 1px solid #d9d9d9;
    border-bottom: 1px solid #d9d9d9;
}

td {
    background: #fdfdfd;
}

th {
    padding: 0;
    text-align: center;
    font-weight: 400;
    background: #e6e6e6;
    border-color: #c4c4c4;
}

thead th {
    height: 18px;
    border-bottom-color: #9f9f9f;
}

thead .sel {
    background: #cfcfcf;
    color: #4a6b58;
    border-bottom: 2px solid #2f7d50;
    line-height: 16px;
}

.corner svg {
    display: block;
    margin: 3px 0 1px 9px;
}

tbody tr:nth-child(3n+2) > * {
    height: 20px;
}

tbody .tall > * {
    height: 58px;
    line-height: 19px;
}

tbody .first > * {
    height: 56px;
}

.tall th {
    background: #cfcfcf;
    color: #6d7f75;
    border-right: 2px solid #3f8a5e;
}

td.mid {
    text-align: center;
}

td a {
    color: #2e75b6;
}

td .visited {
    color: #97648a;
}

.pick {
    position: relative;
    background: #c6c6c6;
    border-right: 2px solid #2f7d50;
    border-left: 1px solid #2f7d50;
    border-bottom-color: #bdbdbd;
}

.pick div {
    height: 57px;
}

.first .pick {
    background: #fdfdfd;
    border-top: 1px solid #2f7d50;
}

/* row 2 is a little shorter than its three lines */
.first .pick div {
    margin-top: -3px;
}

.last .pick {
    border-bottom: 2px solid #2f7d50;
}

.last .pick div {
    height: 56px;
}

.handle {
    position: absolute;
    right: -3px;
    bottom: -3px;
    width: 5px;
    height: 5px;
    background: #2f7d50;
}

.autofill {
    position: absolute;
    right: -22px;
    bottom: -22px;
    width: 20px;
    height: 20px;
    background: #fff;
    border: 1px solid #b5b5b5;
    z-index: 1;
}

.pointer {
    position: absolute;
    left: 191px;
    bottom: -6px;
}

.vscroll {
    display: flex;
    flex-direction: column;
    align-items: center;
    width: 17px;
    margin-left: 1px;
}

.vscroll button, .hscroll button {
    width: 16px;
    height: 16px;
    background: #fff;
    border: 1px solid #ababab;
}

.vscroll .thumb {
    width: 16px;
    flex: 1;
    margin-bottom: 21px;
    background: #fff;
    border: 1px solid #ababab;
}

/* Sheet tabs */
.sheets {
    display: flex;
    flex: none;
    height: 24px;
    background: #e6e6e6;
    border-top: 1px solid #a8a8a8;
    border-bottom: 1px solid #d4d4d4;
}

.sheets > button {
    height: 20px;
    padding: 0 11px 0 10px;
    border-left: 1px solid #bdbdbd;
}

.step {
    display: flex;
    width: 79px;
    padding: 0 7px 0 18px;
    justify-content: space-between;
}

.step .all {
    font-weight: 700;
}

.sheets > .active {
    padding: 0 8px;
    background: #fff;
    color: #1e7145;
    font-weight: 700;
    border: none;
    border-bottom: 2px solid #1e7145;
}

.sheets > .add {
    padding: 0 25px;
    border: none;
}

.sheets .dots {
    margin-left: auto;
    width: 26px;
}

.hscroll {
    display: flex;
    align-items: center;
    flex: 0 1 482px;
    height: 22px;
    margin-right: 18px;
}

.hscroll .thumb {
    flex: 1;
    height: 16px;
    margin-right: 25px;
    background: #fff;
    border: 1px solid #ababab;
}

/* Status bar */
.status {
    display: flex;
    align-items: center;
    flex: none;
    height: 21px;
    padding: 0 5px;
    background: #f0f0eb;
    font-size: 10px;
}

.ready {
    width: 48px;
}

.status > svg {
    margin-right: 2px;
}

.count {
    margin-left: auto;
    margin-right: 18px;
}

.view {
    width: 40px;
    height: 21px;
}

.status .on {
    outline: none;
}

.zoom {
    width: 16px;
    font-size: 13px;
    color: #888;
}

.status input {
    appearance: none;
    width: 100px;
    height: 11px;
    background: linear-gradient(#666, #666) center / 100% 1px no-repeat;
}

.status input::-webkit-slider-thumb {
    appearance: none;
    width: 5px;
    height: 11px;
    background: #333;
}

.percent {
    width: 38px;
    text-align: right;
}

/* Taskbar */
.taskbar {
    display: flex;
    flex: none;
    height: 40px;
    background: linear-gradient(to right, #1e363c, #1e353d 50%, #1a2a40 80%, #1a2740);
    color: #e6eaee;
}

.taskbar button {
    width: 50px;
    height: 40px;
}

.taskbar .open {
    background: linear-gradient(#76a9dc, #76a9dc) center bottom / 41px 2px no-repeat;
}

.taskbar .now {
    background: linear-gradient(#76a9dc, #76a9dc) center bottom / 50px 2px no-repeat #465b62;
}

.tray {
    display: flex;
    align-items: center;
    gap: 17px;
    margin-left: auto;
    padding-right: 24px;
    text-align: center;
    font-size: 11px;
    line-height: 18px;
}

.lang {
    width: 24px;
    margin-right: -5px;
}

.clock {
    width: 58px;
}
```
